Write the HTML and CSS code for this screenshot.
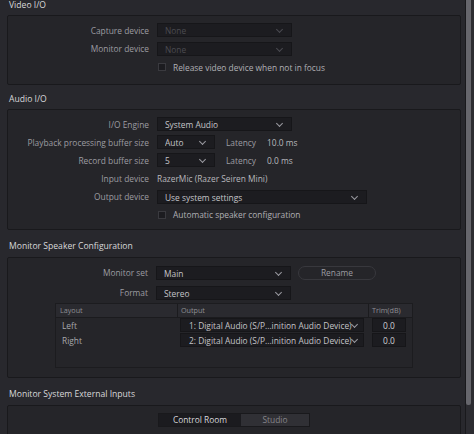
FILE: index.html
```html
<!DOCTYPE html>
<html lang="en">
<head>
  <meta charset="UTF-8" />
  <title>Video and Audio I/O</title>
  <link rel="stylesheet" href="styles.css">
</head>
<body>
  <div class="window">
    <div class="content">

      <div class="group-title first">Video I/O</div>
      <div class="panel panel-video">
        <div class="form">
          <label class="field-label">Capture device</label>
          <div class="select disabled"><span>None</span><i class="chev"></i></div>

          <label class="field-label">Monitor device</label>
          <div class="select disabled"><span>None</span><i class="chev"></i></div>

          <span></span>
          <div class="check"><i class="box"></i>Release video device when not in focus</div>
        </div>
      </div>

      <div class="group-title second">Audio I/O</div>
      <div class="panel panel-audio">
        <div class="form audio">
          <label class="field-label">I/O Engine</label>
          <div class="select"><span>System Audio</span><i class="chev"></i></div>

          <label class="field-label">Playback processing buffer size</label>
          <div class="inline">
            <div class="select small"><span>Auto</span><i class="chev"></i></div>
            <span class="field-label latency">Latency</span>
            <span class="value">10.0 ms</span>
          </div>

          <label class="field-label">Record buffer size</label>
          <div class="inline">
            <div class="select small"><span>5</span><i class="chev"></i></div>
            <span class="field-label latency">Latency</span>
            <span class="value">0.0 ms</span>
          </div>

          <label class="field-label">Input device</label>
          <div class="value">RazerMic (Razer Seiren Mini)</div>

          <label class="field-label">Output device</label>
          <div class="select wide"><span>Use system settings</span><i class="chev"></i></div>

          <span></span>
          <div class="check"><i class="box"></i>Automatic speaker configuration</div>
        </div>
      </div>

      <div class="group-title">Monitor Speaker Configuration</div>
      <div class="panel panel-speaker">
        <div class="form spaced">
          <label class="field-label">Monitor set</label>
          <div class="inline">
            <div class="select"><span>Main</span><i class="chev"></i></div>
            <button class="rename-btn">Rename</button>
          </div>

          <label class="field-label">Format</label>
          <div class="select"><span>Stereo</span><i class="chev"></i></div>
        </div>

        <div class="speaker-table">
          <div class="table-head">
            <div class="col-layout">Layout</div>
            <div class="col-output">Output</div>
            <div class="col-trim">Trim(dB)</div>
          </div>
          <div class="table-row">
            <div class="col-layout">Left</div>
            <div class="col-output"><div class="select cell"><span>1: Digital Audio (S/P...inition Audio Device)</span><i class="chev"></i></div></div>
            <div class="col-trim"><div class="trim-box">0.0</div></div>
          </div>
          <div class="table-row">
            <div class="col-layout">Right</div>
            <div class="col-output"><div class="select cell"><span>2: Digital Audio (S/P...inition Audio Device)</span><i class="chev"></i></div></div>
            <div class="col-trim"><div class="trim-box">0.0</div></div>
          </div>
        </div>
      </div>

      <div class="group-title">Monitor System External Inputs</div>
      <div class="panel panel-inputs">
        <div class="segmented">
          <div class="segment active">Control Room</div>
          <div class="segment">Studio</div>
        </div>
      </div>

    </div>
    <div class="scrollbar"><div class="thumb"></div></div>
  </div>
</body>
</html>
```

FILE: styles.css
```css
body {
  margin: 0;
  background-color: #28282d;
  color: #c4c4c8;
  font-family: "Open Sans", "Noto Sans", sans-serif;
  font-size: 8.4px;
  overflow: hidden;
}

.window {
  display: flex;
  height: 434px;
  overflow: hidden;
}

.content {
  width: 465px;
  padding: 0 4px 0 7px;
  box-sizing: border-box;
}

.scrollbar {
  width: 9px;
  background-color: #2c2c31;
  border-left: 1px solid #19191c;
  box-sizing: border-box;
}

.thumb {
  width: 5px;
  height: 405px;
  background-color: #66666c;
  border-radius: 0 0 2px 2px;
}

.group-title {
  height: 12px;
  line-height: 12px;
  padding: 10px 0 5px 2px;
  color: #d8d8da;
  font-size: 8.6px;
}

.group-title.first {
  margin-top: -1px;
  padding-top: 0;
  padding-bottom: 4px;
}

.group-title.second {
  padding-top: 8px;
  padding-bottom: 4px;
}

.panel {
  background-color: #252529;
  border: 1px solid #19191c;
  border-radius: 2px;
}

.panel-video {
  padding: 7px 0 10px;
}

.panel-audio {
  padding: 7px 0 7px;
}

.panel-speaker {
  padding: 8px 0 9px;
}

.panel-inputs {
  padding: 7px 0 10px;
}

.form {
  display: grid;
  grid-template-columns: 141px auto;
  grid-auto-rows: 14px;
  column-gap: 8px;
  row-gap: 4.5px;
  align-items: center;
}

.form.audio {
  row-gap: 4.2px;
}

.form.spaced {
  row-gap: 6px;
  grid-template-columns: 140px auto;
}

.field-label {
  text-align: right;
  color: #9c9ca1;
  white-space: nowrap;
}

.value {
  color: #b8b8bc;
}

.inline {
  display: flex;
  align-items: center;
}

.latency {
  margin-left: 11px;
  margin-right: 11px;
}

.select {
  position: relative;
  width: 135px;
  height: 14px;
  line-height: 13px;
  padding-left: 7px;
  box-sizing: border-box;
  background-color: #1c1c20;
  border: 1px solid #161619;
  color: #c4c4c8;
  white-space: nowrap;
  overflow: hidden;
}

.select span {
  display: block;
  overflow: hidden;
  padding-right: 14px;
}

.select.small {
  width: 58px;
}

.select.wide {
  width: 210px;
}

.select.disabled {
  color: #4b4b50;
}

.chev {
  position: absolute;
  right: 9px;
  top: 3px;
  width: 4px;
  height: 4px;
  border-right: 1px solid #9a9aa0;
  border-bottom: 1px solid #9a9aa0;
  transform: rotate(45deg);
}

.select.disabled .chev {
  border-color: #4b4b50;
}

.check {
  display: flex;
  align-items: center;
  color: #b0b0b4;
  height: 14px;
}

.box {
  width: 8px;
  height: 8px;
  margin: 0 7px 0 1px;
  background-color: #1c1c20;
  border: 1px solid #3a3a3f;
  box-sizing: border-box;
}

.rename-btn {
  width: 78px;
  height: 14px;
  margin-left: 7px;
  padding: 0;
  background-color: transparent;
  border: 1px solid #38383d;
  border-radius: 7px;
  color: #9c9ca1;
  font-family: inherit;
  font-size: 8.4px;
  line-height: 12px;
}

.speaker-table {
  margin: 3px 0 0 47px;
  width: 358px;
  height: 65px;
  border: 1px solid #1c1c1f;
  box-sizing: border-box;
  background-color: #252529;
}

.table-head,
.table-row {
  display: flex;
}

.table-head {
  height: 13px;
  line-height: 13px;
  background-color: #2a2a2f;
  border-bottom: 1px solid #1b1b1e;
  color: #8e8e93;
  font-size: 7.2px;
}

.table-head > div + div {
  border-left: 1px solid #1b1b1e;
}

.table-row {
  height: 15px;
  align-items: center;
  color: #a8a8ac;
}

.col-layout {
  width: 121px;
  padding-left: 4px;
  box-sizing: border-box;
}

.table-row .col-layout {
  padding-left: 6px;
}

.col-output {
  width: 191px;
  padding-left: 3px;
  box-sizing: border-box;
}

.col-trim {
  width: 44px;
  padding-left: 3px;
  box-sizing: border-box;
}

.select.cell {
  width: 184px;
  padding-left: 8px;
}

.select.cell span {
  padding-right: 11px;
}

.select.cell .chev {
  right: 6px;
}

.trim-box {
  width: 34px;
  height: 14px;
  line-height: 13px;
  margin-left: 1px;
  text-align: center;
  background-color: #1c1c20;
  border: 1px solid #161619;
  box-sizing: border-box;
  color: #d0d0d4;
}

.segmented {
  display: flex;
  margin-left: 150px;
  width: 152px;
  height: 14px;
  border: 1px solid #19191c;
  box-sizing: border-box;
}

.segment {
  flex: 1;
  text-align: center;
  line-height: 12px;
  background-color: #303035;
  color: #85858a;
}

.segment.active {
  flex: 0 0 82px;
  background-color: #1b1b1f;
  color: #d8d8dc;
}
```
